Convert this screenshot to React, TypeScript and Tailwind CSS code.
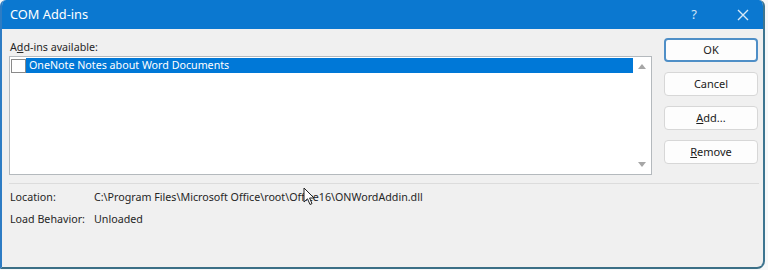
import type { ReactNode } from "react";

const FONT = { fontFamily: '"Noto Sans", "Open Sans", sans-serif' };

function DlgButton({ children, primary }: { children: ReactNode; primary?: boolean }) {
  return (
    <button
      className={`flex h-[24px] w-[94px] items-center justify-center rounded-[4px] bg-[#fdfdfd] text-[11px] text-[#1b1b1b] ${
        primary ? "border-2 border-[#4f8fc7]" : "border border-[#d7d7d7]"
      }`}
    >
      {children}
    </button>
  );
}

function Cursor() {
  return (
    <svg className="absolute left-[303px] top-[187px]" width="12" height="19" viewBox="0 0 12 19">
      <path d="M1 1 L1 15 L4.5 11.8 L7 17.5 L9 16.6 L6.6 11 L11 11 Z" fill="#fff" stroke="#222" strokeWidth="1" strokeLinejoin="round" />
    </svg>
  );
}

export default function App() {
  return (
    <div className="relative h-[270px] w-[768px] overflow-hidden bg-[#f6f8f9]" style={FONT}>
      <div className="flex h-[269px] w-[765px] flex-col overflow-hidden rounded-t-[6px] rounded-br-[8px] border-b-[2px] border-l-[2px] border-r-[2px] border-b-[#3b6f86] border-l-[#2d7cc4] border-r-[#3d7590] bg-[#f0f0f0]">
        {/* title bar */}
        <div className="flex h-[29px] shrink-0 items-center bg-[#0b78d0] pl-[8px] text-white">
          <span className="text-[12.8px]">COM Add-ins</span>
          <span className="ml-auto mr-[40px] text-[13px] text-[#cfe3f5]">?</span>
          <svg className="mr-[14px]" width="12" height="12" viewBox="0 0 12 12">
            <path d="M1 1 L11 11 M11 1 L1 11" stroke="#d6e8f7" strokeWidth="1.4" />
          </svg>
        </div>

        {/* body */}
        <div className="flex flex-1 flex-col px-[7px]">
          <div className="flex">
            <div className="flex flex-col">
              <div className="mt-[9px] h-[18px] pl-[1px] text-[10.7px] leading-[18px] text-[#262626]">
                A<u>d</u>d-ins available:
              </div>
              <div className="flex h-[119px] w-[643px] border border-[#b4b9bd] bg-white">
                <div className="flex-1 pl-[1px] pt-[1px]">
                  <div className="flex h-[15px] items-center">
                    <div className="h-[14px] w-[15px] shrink-0 border border-[#8a8a8a] bg-white" />
                    <div className="flex h-[15px] flex-1 items-center bg-[#0078d7] pl-[3px] text-[10.7px] text-white">
                      OneNote Notes about Word Documents
                    </div>
                  </div>
                </div>
                <div className="flex w-[18px] flex-col items-center justify-between py-[6px]">
                  <svg width="8" height="6" viewBox="0 0 8 6">
                    <path d="M0 6 L4 1 L8 6 Z" fill="#a6a6a6" />
                  </svg>
                  <svg width="8" height="6" viewBox="0 0 8 6">
                    <path d="M0 0 L4 5 L8 0 Z" fill="#a6a6a6" />
                  </svg>
                </div>
              </div>
            </div>
            <div className="ml-[12px] mt-[9px] flex flex-col gap-[10px]">
              <DlgButton primary>OK</DlgButton>
              <DlgButton>Cancel</DlgButton>
              <DlgButton>
                <span>
                  <u>A</u>dd...
                </span>
              </DlgButton>
              <DlgButton>
                <span>
                  <u>R</u>emove
                </span>
              </DlgButton>
            </div>
          </div>

          <div className="mt-[8px] h-px w-[750px] bg-[#dcdcdc]" />

          <div className="mt-[2px] flex h-[22px] items-center whitespace-nowrap pl-[1px] text-[10.7px] text-[#262626]">
            <span className="w-[84px] shrink-0">Location:</span>
            <span>C:\Program Files\Microsoft Office\root\Office16\ONWordAddin.dll</span>
          </div>
          <div className="flex h-[22px] items-center whitespace-nowrap pl-[1px] text-[10.7px] text-[#262626]">
            <span className="w-[84px] shrink-0">Load Behavior:</span>
            <span>Unloaded</span>
          </div>
        </div>
      </div>
      <Cursor />
    </div>
  );
}
